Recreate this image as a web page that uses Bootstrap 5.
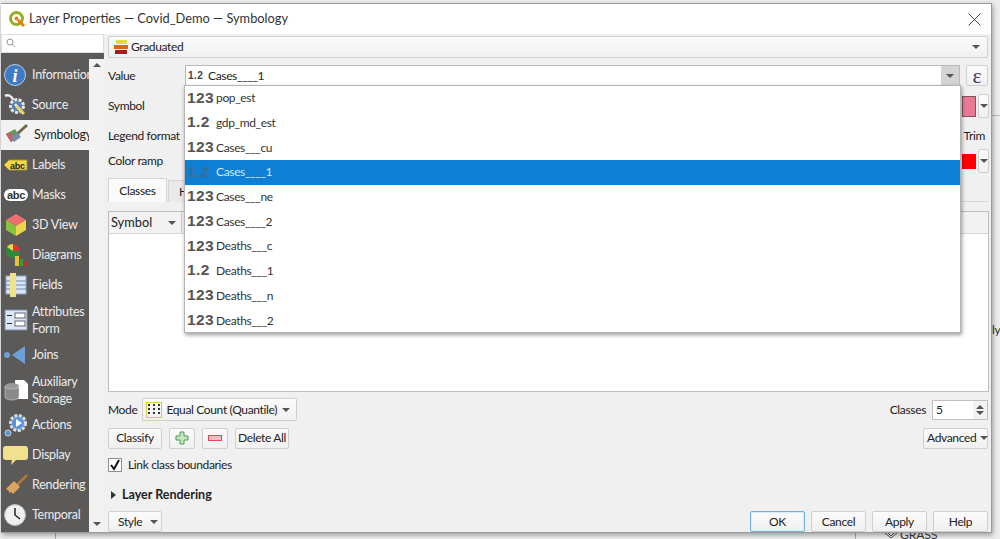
<!DOCTYPE html>
<html lang="en">
<head>
<meta charset="utf-8">
<link href="https://cdn.jsdelivr.net/npm/bootstrap@5.3.0/dist/css/bootstrap.min.css" rel="stylesheet">
<style>
html,body{height:539px;overflow:hidden;margin:0}
body{background:#ededed;font-family:"Lato","Open Sans",sans-serif;font-size:12px;letter-spacing:-.35px;color:#222;position:relative}
.backdrop-grass{position:absolute;left:900px;top:529px;font-size:12px;line-height:1;letter-spacing:0;color:#333}
.backdrop-grassicon{position:absolute;left:885px;top:533px}
.backdrop-ly{position:absolute;left:992px;top:321px;color:#333}
.backdrop-v1{position:absolute;left:55px;top:530px;width:1px;height:9px;background:#aaa}
.backdrop-v2{position:absolute;left:855px;top:530px;width:1px;height:9px;background:#aaa}
.backdrop-h{position:absolute;left:990px;top:115px;width:10px;height:1px;background:#bbb}
.dlg{position:absolute;left:1px;top:3px;width:991px;height:530px;background:#f0f0f0;border:1px solid #9a9a9a;border-left:0;box-shadow:1px 2px 5px rgba(0,0,0,.35)}
.titlebar{height:30px;flex:none;background:#fff;padding-left:7px;font-size:12.8px;letter-spacing:0;color:#333}
.ttlicon{margin-right:3px}
.closex{margin-right:10px}
.dlg-body{height:498px}
.sideb{width:103px;flex:none}
.searchbx{height:19px;flex:none;background:#fff;border:1px solid #ddd;padding:0 4px 2px}
.sidewrap{flex:1;background:#5b5a59;min-height:0}
.sidelist{width:88px;flex:none;padding-top:7px;color:#ececec;font-size:12.5px;letter-spacing:-.25px}
.sitem{height:30px;padding-left:2px;gap:3px;white-space:nowrap;overflow:hidden}
.sitem.two{height:40px;line-height:17px}
.sitem.sel{background:#f2f2f2;color:#222}
.symtxt{margin-left:2px}
.sitem svg{width:26px;height:26px;flex:none}
.scrollst{width:15px;flex:none;background:#f2f2f2;margin-top:6px;padding:4px 0 6px}
.arr{width:0;height:0;flex:none;border-left:4px solid transparent;border-right:4px solid transparent}
.arr.dn{border-top:4px solid #555}
.arr.up{border-bottom:4px solid #555}
.main{flex:1;padding:2px 3px 0 4px;min-width:0}
.main>*{flex:none}
.qbtn{background:linear-gradient(#fbfbfb,#f0f0f0);border:1px solid #cfcfcf;border-radius:2px;height:21px;padding:0 7px;gap:6px;color:#222;white-space:nowrap}
.qbtn svg{flex:none}
.gradcombo{height:22px;padding-left:5px;padding-right:7px;gap:1px}
.rowv{margin-top:7px;height:21px}
.lbl{width:77px;flex:none;white-space:nowrap}
.valcombo{flex:1;height:21px;background:#fff;border:1px solid #b9b9b9;padding-left:2px;gap:3px}
.valarrow{width:18px;height:19px;background:#d4d4d4;margin-left:auto}
.eps{width:22px;height:21px;margin-left:6px;padding:0;font-family:"Liberation Serif",serif;font-size:22px;line-height:1;color:#4a3560}
.rowsym{margin-top:9px;height:22px}
.spacer{flex:1}
.swatch{width:14px;height:21px;background:#e87a94;border:1px solid #8a5060}
.swatch.red{background:#f00;border-color:#f00;height:15px}
.splitdd{width:11px;height:24px;padding:0;margin-left:2px;margin-right:-1px}
.rowleg{height:20px;margin-top:9px}
.rowleg span{margin-right:3px}
.rowramp{height:20px;margin-top:5px}
.tabsrow{height:24px;margin-top:7px;gap:1px;border-bottom:1px solid #d8d8d8}
.qtab{background:#fafafa;border:1px solid #d4d4d4;border-bottom:0;width:59px;height:24px}
.qtab2{background:#e9e9e9;border:1px solid #d4d4d4;border-bottom:0;width:30px;height:22px;margin-top:2px;padding-left:10px}
.tbl{height:181px;margin-top:9px;background:#fff;border:1px solid #bdbdbd;margin-right:-1px}
.thead{height:22px;background:#f2f2f2;border-bottom:1px solid #d6d6d6;font-size:12.8px;letter-spacing:0;padding-left:2px}
.thcell{width:71px;padding-right:5px;border-right:1px solid #ccc;height:100%}
.moderow{margin-top:6px;height:23px;gap:5px}
.modebtn{height:23px;width:155px;padding:0 6px 0 3px;gap:4px}
.spinbx{width:56px;height:20px;background:#fff;border:1px solid #c0c0c0;padding-left:3px;margin-left:1px}
.spinarr{width:14px;height:100%;margin-left:auto;gap:2px;background:#f2f2f2}
.clsrow{margin-top:6px;height:22px;gap:7px}
.qbtn.icn{width:26px;padding:0}
.clsb{width:54px;padding:0}
.delbtn{padding:0;width:54px}
.advb{width:65px;padding:0 3px;gap:4px;justify-content:space-between}
.chkrow{margin-top:7px;height:18px;gap:6px}
.chk{width:14px;height:14px;background:#fff;border:1px solid #8f8f8f}
.rendrow{margin-top:12px;height:18px;gap:6px;font-weight:700;font-size:12.5px;letter-spacing:0;padding-left:3px}
.tri{width:0;height:0;border-top:4px solid transparent;border-bottom:4px solid transparent;border-left:5px solid #333}
.btnrow{margin-top:7px;height:21px;gap:6px}
.stybtn{width:54px;height:21px;padding:0 0 0 9px;gap:8px}
.dlgbtn{width:55px;height:21px;padding:0}
.okb{border-color:#6fb2dc;box-shadow:inset 0 0 0 1px #d6ecf8}
.popup{position:absolute;left:184px;top:85px;width:777px;height:248px;background:#fff;border:1px solid #b5b5b5;box-shadow:1px 2px 4px rgba(0,0,0,.4)}
.pit{height:24.7px;padding-left:2px;white-space:nowrap;color:#333}
.pit.act{background:#0f7fd3;color:#cfe9fb}
.pit.act .nt{color:#3a6d94}
.nt{font-family:"Liberation Sans",sans-serif;font-weight:700;font-size:15.5px;color:#555;width:29px;flex:none;letter-spacing:.4px;line-height:1;margin-top:-2px}
.nt.small12{font-size:10px;width:17px;color:#444;margin-top:0}
</style>
</head>
<body>
<div class="backdrop-ly">ly</div>
<div class="backdrop-grass">GRASS</div>
<svg class="backdrop-grassicon" width="12" height="6" viewBox="0 0 12 6"><path d="M0 0l6 5 6-5M3 0l3 3 3-3" fill="none" stroke="#555"/></svg>
<div class="backdrop-v1"></div><div class="backdrop-v2"></div><div class="backdrop-h"></div>
<div class="dlg d-flex flex-column">
  <div class="titlebar d-flex align-items-center">
    <svg class="ttlicon" width="18" height="18" viewBox="0 0 18 18"><circle cx="8.500" cy="8.500" r="6" fill="none" stroke="#93b023" stroke-width="3"/><path d="M10 10l6 6" stroke="#ee7913" stroke-width="3"/><circle cx="8.500" cy="8.500" r="2" fill="#ee7913"/></svg>
    <span>Layer Properties — Covid_Demo — Symbology</span>
    <svg class="ms-auto closex" width="13" height="13" viewBox="0 0 13 13"><path d="M.5.5l12 12M12.500.5l-12 12" stroke="#444" stroke-width="1"/></svg>
  </div>
  <div class="dlg-body d-flex flex-grow-1">
    <div class="sideb d-flex flex-column">
      <div class="searchbx d-flex align-items-center"><svg width="10" height="10" viewBox="0 0 10 10"><circle cx="4" cy="4" r="3" fill="none" stroke="#999"/><path d="M6 6l3 3" stroke="#999"/></svg></div>
      <div class="sidewrap d-flex">
      <div class="sidelist">
        <div class="sitem d-flex align-items-center"><svg viewBox="0 0 26 26"><circle cx="12" cy="13" r="10.500" fill="#3f7cc4" stroke="#b8cde6"/><text x="12" y="20" font-family="Liberation Serif" font-style="italic" font-weight="700" font-size="18" fill="#fff" text-anchor="middle">i</text></svg><span>Information</span></div>
        <div class="sitem d-flex align-items-center"><svg viewBox="0 0 26 26"><circle cx="14" cy="14" r="6.500" fill="#5a7fb0" stroke="#e6e6e6" stroke-width="3" stroke-dasharray="3 1.500"/><path d="M2 4c3-2 7 0 8 4M12 12l8 9" stroke="#eee" stroke-width="2.500" fill="none"/><path d="M13 14l8 8" stroke="#e3d463" stroke-width="3"/></svg><span>Source</span></div>
        <div class="sitem sel d-flex align-items-center"><svg viewBox="0 0 26 26"><path d="M3 12l9-5 5 8-9 5z" fill="#5c9b5c"/><path d="M3 12l5 8 4-3-5-7z" fill="#c85d5d"/><path d="M12 14l12-11" stroke="#6e6a4e" stroke-width="3"/><path d="M8 16l6-6 4 5-7 5z" fill="#7a8ca8"/></svg><span class="symtxt">Symbology</span></div>
        <div class="sitem d-flex align-items-center"><svg viewBox="0 0 26 26"><path d="M1 13l5-5h18v10H6z" fill="#f2da4a" stroke="#a8912a"/><text x="14.500" y="16.500" font-family="Liberation Sans" font-weight="700" font-size="9" fill="#222" text-anchor="middle">abc</text></svg><span>Labels</span></div>
        <div class="sitem d-flex align-items-center"><svg viewBox="0 0 26 26"><rect x="1" y="7" width="24" height="12" rx="6" fill="#fff"/><text x="13" y="17" font-family="Liberation Sans" font-weight="700" font-size="11" fill="#333" text-anchor="middle">abc</text></svg><span>Masks</span></div>
        <div class="sitem d-flex align-items-center"><svg viewBox="0 0 26 26"><path d="M13 2l10 6-10 6L3 8z" fill="#ee6f6f"/><path d="M3 8l10 6v10L3 18z" fill="#86c440"/><path d="M23 8l-10 6v10l10-6z" fill="#ecd64a"/></svg><span>3D View</span></div>
        <div class="sitem d-flex align-items-center"><svg viewBox="0 0 26 26"><circle cx="10" cy="9" r="7" fill="#2e8b3a"/><path d="M10 9V2a7 7 0 0 1 7 7z" fill="#d33"/><path d="M10 9L4 5a7 7 0 0 1 6-3z" fill="#ecd64a"/><rect x="12" y="14" width="4" height="10" fill="#ecc23a"/><rect x="17" y="17" width="3" height="7" fill="#3a9a4a"/><rect x="21" y="19" width="4" height="5" fill="#b33"/></svg><span>Diagrams</span></div>
        <div class="sitem d-flex align-items-center"><svg viewBox="0 0 26 26"><rect x="3" y="4" width="20" height="18" fill="#dbe6f2" stroke="#8aa6c6"/><path d="M3 9h20M3 13h20M3 17h20" stroke="#6d8fb5"/><rect x="7" y="1" width="6" height="24" fill="#f0e28a"/></svg><span>Fields</span></div>
        <div class="sitem two d-flex align-items-center"><svg viewBox="0 0 26 26"><rect x="2" y="3" width="22" height="20" fill="#dbe6f2" stroke="#7b93ad"/><rect x="12" y="6" width="10" height="5" fill="#fff" stroke="#667"/><rect x="12" y="14" width="10" height="5" fill="#fff" stroke="#667"/><path d="M4 8.500h5M4 16.500h5" stroke="#333"/></svg><span>Attributes<br>Form</span></div>
        <div class="sitem d-flex align-items-center"><svg viewBox="0 0 26 26"><path d="M9 13l13-9v18z" fill="#6f9fd8"/><circle cx="4" cy="13" r="3" fill="#6f9fd8"/></svg><span>Joins</span></div>
        <div class="sitem two d-flex align-items-center"><svg viewBox="0 0 26 26"><path d="M12 3h9l4 4v15H12z" fill="#fff"/><ellipse cx="9" cy="9" rx="7" ry="3" fill="#999"/><path d="M2 9v11c0 4 14 4 14 0V9c0 4-14 4-14 0z" fill="#8a8a8a" stroke="#ddd" stroke-width=".5"/></svg><span>Auxiliary<br>Storage</span></div>
        <div class="sitem d-flex align-items-center"><svg viewBox="0 0 26 26"><circle cx="15" cy="11" r="7.500" fill="#5a95d8" stroke="#ddd" stroke-width="3" stroke-dasharray="3 1.500"/><path d="M13 7l6 4-6 4z" fill="#fff"/><circle cx="5" cy="21" r="3" fill="#5a95d8" stroke="#ccc"/></svg><span>Actions</span></div>
        <div class="sitem d-flex align-items-center"><svg viewBox="0 0 26 26"><path d="M3 4h19a3 3 0 0 1 3 3v8a3 3 0 0 1-3 3H13l-5 5 1-5H3a3 3 0 0 1-3-3V7a3 3 0 0 1 3-3z" fill="#f2e18c"/></svg><span>Display</span></div>
        <div class="sitem d-flex align-items-center"><svg viewBox="0 0 26 26"><path d="M14 13L24 3" stroke="#b5763a" stroke-width="2.500"/><path d="M3 17l8-8 6 6-7 7-2-2-2 1 0-2-3-2z" fill="#dba55f"/></svg><span>Rendering</span></div>
        <div class="sitem d-flex align-items-center"><svg viewBox="0 0 26 26"><circle cx="12" cy="13" r="10.500" fill="#f0f0f0" stroke="#bbb"/><path d="M12 6v7l5 4" stroke="#222" stroke-width="1.500" fill="none"/></svg><span>Temporal</span></div>
      </div>
      <div class="scrollst d-flex flex-column align-items-center justify-content-between">
        <div class="arr up"></div><div class="arr dn"></div>
      </div>
      </div>
    </div>
    <div class="main d-flex flex-column">
      <div class="qbtn gradcombo d-flex align-items-center">
        <svg width="16" height="14" viewBox="0 0 16 14"><rect x="2" y="0" width="11" height="4" fill="#f5d33c"/><rect x="0" y="5" width="14" height="4" fill="#d9641e"/><rect x="1" y="10" width="12" height="4" fill="#a61c1c"/></svg>
        <span>Graduated</span><div class="arr dn ms-auto"></div>
      </div>
      <div class="rowv d-flex align-items-center">
        <div class="lbl">Value</div>
        <div class="valcombo d-flex align-items-center"><span class="nt small12">1.2</span><span>Cases____1</span><div class="valarrow d-flex align-items-center justify-content-center"><div class="arr dn"></div></div></div>
        <div class="qbtn eps d-flex align-items-center justify-content-center">ε</div>
      </div>
      <div class="rowsym d-flex align-items-center">
        <div class="lbl">Symbol</div><div class="spacer"></div><div class="swatch"></div>
        <div class="qbtn splitdd d-flex align-items-center justify-content-center"><div class="arr dn"></div></div>
      </div>
      <div class="rowleg d-flex align-items-center"><div class="lbl">Legend format</div><div class="spacer"></div><span>Trim</span></div>
      <div class="rowramp d-flex align-items-center">
        <div class="lbl">Color ramp</div><div class="spacer"></div><div class="swatch red"></div>
        <div class="qbtn splitdd d-flex align-items-center justify-content-center"><div class="arr dn"></div></div>
      </div>
      <div class="tabsrow d-flex">
        <div class="qtab d-flex align-items-center justify-content-center">Classes</div>
        <div class="qtab2 d-flex align-items-center">H</div>
      </div>
      <div class="tbl">
        <div class="thead d-flex align-items-center"><div class="thcell d-flex align-items-center justify-content-between"><span>Symbol</span><div class="arr dn"></div></div></div>
      </div>
      <div class="moderow d-flex align-items-center">
        <span>Mode</span>
        <div class="qbtn modebtn d-flex align-items-center">
          <svg width="16" height="16" viewBox="0 0 16 16"><rect x=".5" y=".5" width="15" height="15" fill="none" stroke="#d9c94a"/><path d="M3 2v12M8 2v12M13 2v12" stroke="#333" stroke-width="2" stroke-dasharray="2 2"/></svg>
          <span>Equal Count (Quantile)</span><div class="arr dn ms-auto"></div>
        </div>
        <div class="spacer"></div>
        <span>Classes</span>
        <div class="spinbx d-flex align-items-center"><span>5</span><div class="spinarr d-flex flex-column align-items-center justify-content-center"><div class="arr up"></div><div class="arr dn"></div></div></div>
      </div>
      <div class="clsrow d-flex align-items-center">
        <div class="qbtn clsb d-flex align-items-center justify-content-center">Classify</div>
        <div class="qbtn icn d-flex align-items-center justify-content-center"><svg width="14" height="14" viewBox="0 0 14 14"><path d="M5 1h4v4h4v4H9v4H5V9H1V5h4z" fill="#c8e8c0" stroke="#4f9a5a"/></svg></div>
        <div class="qbtn icn d-flex align-items-center justify-content-center"><svg width="14" height="8" viewBox="0 0 14 8"><rect x=".5" y="1.500" width="13" height="5" fill="#f6b8c0" stroke="#e0485c"/></svg></div>
        <div class="qbtn delbtn d-flex align-items-center justify-content-center">Delete All</div>
        <div class="spacer"></div>
        <div class="qbtn advb d-flex align-items-center">Advanced<div class="arr dn"></div></div>
      </div>
      <div class="chkrow d-flex align-items-center">
        <div class="chk d-flex align-items-center justify-content-center"><svg width="12" height="12" viewBox="0 0 12 12"><path d="M2 6l3 4 5-9" fill="none" stroke="#111" stroke-width="2"/></svg></div>
        <span>Link class boundaries</span>
      </div>
      <div class="rendrow d-flex align-items-center"><div class="tri"></div><span>Layer Rendering</span></div>
      <div class="btnrow d-flex align-items-center">
        <div class="qbtn stybtn d-flex align-items-center">Style<div class="arr dn"></div></div>
        <div class="spacer"></div>
        <div class="qbtn dlgbtn okb d-flex align-items-center justify-content-center">OK</div>
        <div class="qbtn dlgbtn d-flex align-items-center justify-content-center">Cancel</div>
        <div class="qbtn dlgbtn d-flex align-items-center justify-content-center">Apply</div>
        <div class="qbtn dlgbtn d-flex align-items-center justify-content-center">Help</div>
      </div>
    </div>
  </div>
</div>
<div class="popup">
  <div class="pit d-flex align-items-center"><span class="nt">123</span><span>pop_est</span></div>
  <div class="pit d-flex align-items-center"><span class="nt">1.2</span><span>gdp_md_est</span></div>
  <div class="pit d-flex align-items-center"><span class="nt">123</span><span>Cases___cu</span></div>
  <div class="pit act d-flex align-items-center"><span class="nt">1.2</span><span>Cases____1</span></div>
  <div class="pit d-flex align-items-center"><span class="nt">123</span><span>Cases___ne</span></div>
  <div class="pit d-flex align-items-center"><span class="nt">123</span><span>Cases____2</span></div>
  <div class="pit d-flex align-items-center"><span class="nt">123</span><span>Deaths___c</span></div>
  <div class="pit d-flex align-items-center"><span class="nt">1.2</span><span>Deaths___1</span></div>
  <div class="pit d-flex align-items-center"><span class="nt">123</span><span>Deaths___n</span></div>
  <div class="pit d-flex align-items-center"><span class="nt">123</span><span>Deaths___2</span></div>
</div>
<script src="https://cdn.jsdelivr.net/npm/bootstrap@5.3.0/dist/js/bootstrap.bundle.min.js"></script>
</body>
</html>
